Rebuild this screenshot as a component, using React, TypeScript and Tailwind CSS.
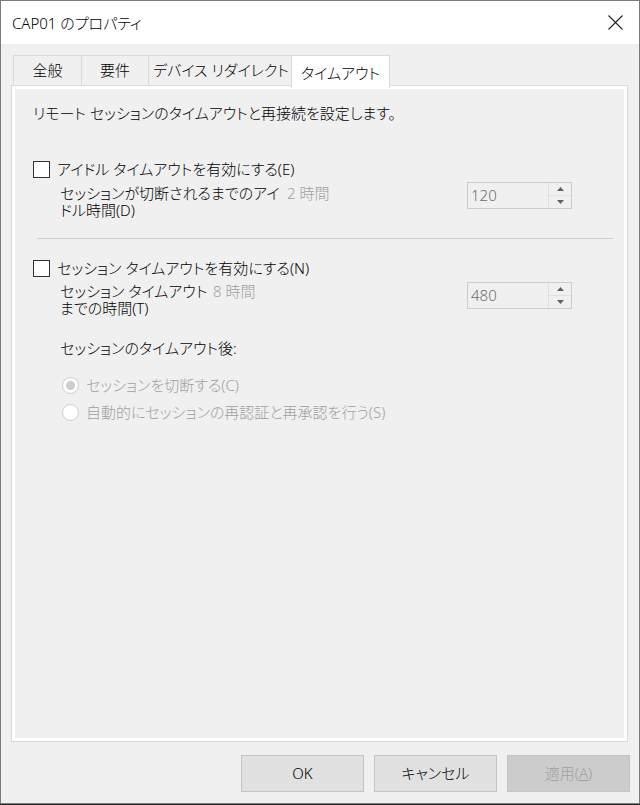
import React from "react";

function Spin({ value }: { value: string }) {
  return (
    <div className="flex w-[105px] h-[27px] border border-[#cccccc] bg-[#f0f0f0]">
      <div className="flex-1 pl-[3px] leading-[25px] text-[#6d6d6d]">{value}</div>
      <div className="w-[23px] flex flex-col border-l border-[#e0e0e0]">
        <div className="flex-1 flex items-center justify-center border-b border-[#e0e0e0]">
          <svg width="7" height="4" viewBox="0 0 7 4"><path d="M0 4 L3.5 0 L7 4 Z" fill="#606060" /></svg>
        </div>
        <div className="flex-1 flex items-center justify-center">
          <svg width="7" height="4" viewBox="0 0 7 4"><path d="M0 0 L3.5 4 L7 0 Z" fill="#606060" /></svg>
        </div>
      </div>
    </div>
  );
}

function Checkbox() {
  return <div className="w-[17px] h-[17px] border border-[#333333] bg-white shrink-0" />;
}

function Radio({ checked }: { checked?: boolean }) {
  return (
    <div className="w-[17px] h-[17px] rounded-full border border-[#cccccc] bg-white flex items-center justify-center shrink-0">
      {checked && <div className="w-[9px] h-[9px] rounded-full bg-[#cccccc]" />}
    </div>
  );
}

export default function App() {
  return (
    <div
      className="w-[640px] h-[805px] bg-[#2b2b2b] text-[15px] font-light text-black [font-feature-settings:'palt']"
      style={{ fontFamily: '"Noto Sans", "Noto Sans CJK JP", sans-serif' }}
    >
      <div className="w-[640px] h-[804px] border border-[#7a7a7a] bg-[#f0f0f0] flex flex-col">
        {/* Title bar */}
        <div className="h-[43px] bg-white flex items-center justify-between pl-[11px] pr-[16px] shrink-0">
          <span className="leading-[20px]">CAP01 のプロパティ</span>
          <svg width="15" height="15" viewBox="0 0 15 15">
            <path d="M0.5 0.5 L14.5 14.5 M14.5 0.5 L0.5 14.5" stroke="#222" strokeWidth="1.1" />
          </svg>
        </div>
        {/* Body */}
        <div className="flex-1 flex flex-col pl-[10px] pr-[11px] pt-[11px]">
          {/* Tabs */}
          <div className="flex items-end pl-[2px] h-[31px] relative z-10 -mb-px">
            <div className="w-[68px] h-[30px] mb-px border-t border-l border-[#d9d9d9] flex items-center justify-center">全般</div>
            <div className="w-[67px] h-[30px] mb-px border-t border-l border-[#d9d9d9] flex items-center justify-center">要件</div>
            <div className="w-[145px] h-[30px] mb-px border-t border-l border-[#d9d9d9] flex items-center justify-center">デバイス リダイレクト</div>
            <div className="w-[99px] h-[33px] -ml-[2px] -mb-[2px] bg-white border-t border-l border-r border-[#d9d9d9] flex items-start pt-[6px] justify-center">タイムアウト</div>
          </div>
          {/* Panel */}
          <div className="flex-1 border border-[#d9d9d9]">
            <div className="h-full border-[3px] border-white pt-[14px] pl-[18px]">
              <div className="leading-[20px] h-[20px]">リモート セッションのタイムアウトと再接続を設定します。</div>

              <div className="mt-[36px] h-[20px] flex items-center">
                <Checkbox />
                <span className="ml-[7px] leading-[20px]">アイドル タイムアウトを有効にする(E)</span>
              </div>
              <div className="mt-[3px] flex items-start pl-[27px]">
                <div className="w-[227px] mt-[3px] leading-[17px]">
                  セッションが切断されるまでのアイ
                  <br />
                  ドル時間(D)
                </div>
                <div className="w-[180px] mt-[3px] leading-[17px] text-[#a0a0a0]">2 時間</div>
                <Spin value="120" />
              </div>

              <div className="mt-[19px] ml-[4px] w-[576px] h-px bg-[#d0d0d0]" />

              <div className="mt-[19px] h-[20px] flex items-center">
                <Checkbox />
                <span className="ml-[7px] leading-[20px]">セッション タイムアウトを有効にする(N)</span>
              </div>
              <div className="mt-[4px] flex items-start pl-[27px]">
                <div className="w-[153px] mt-[1px] leading-[17px]">
                  セッション タイムアウト
                  <br />
                  までの時間(T)
                </div>
                <div className="w-[254px] mt-[1px] leading-[17px] text-[#a0a0a0]">8 時間</div>
                <Spin value="480" />
              </div>

              <div className="mt-[21px] h-[20px] leading-[20px] pl-[27px]">セッションのタイムアウト後:</div>

              <div className="mt-[17px] h-[20px] flex items-center pl-[29px] text-[#a0a0a0]">
                <Radio checked />
                <span className="ml-[7px] leading-[20px]">セッションを切断する(C)</span>
              </div>
              <div className="mt-[7px] h-[20px] flex items-center pl-[29px] text-[#a0a0a0]">
                <Radio />
                <span className="ml-[7px] leading-[20px]">自動的にセッションの再認証と再承認を行う(S)</span>
              </div>
            </div>
          </div>
          {/* Buttons */}
          <div className="mt-[13px] mb-[11px] h-[37px] flex justify-end gap-[10px] -mr-[2px]">
            <div className="w-[123px] h-[37px] bg-[#e1e1e1] border border-[#c4c4c4] flex items-center justify-center">OK</div>
            <div className="w-[123px] h-[37px] bg-[#e1e1e1] border border-[#c4c4c4] flex items-center justify-center">キャンセル</div>
            <div className="w-[123px] h-[37px] bg-[#cccccc] border border-[#c4c4c4] flex items-center justify-center text-[#a0a0a0]">
              適用(<span className="underline">A</span>)
            </div>
          </div>
        </div>
      </div>
    </div>
  );
}
